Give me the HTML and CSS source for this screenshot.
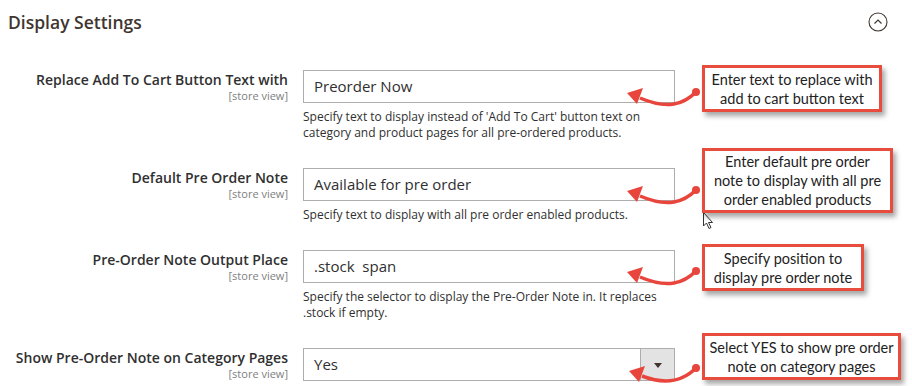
FILE: index.html
```html
<!DOCTYPE html>
<html lang="en">
<head>
  <meta charset="UTF-8">
  <title>Display Settings</title>
  <link rel="stylesheet" href="styles.css">
</head>
<body>
  <div class="section">
    <div class="section-head">
      <h2>Display Settings</h2>
      <span class="toggle">
        <svg width="20" height="20" viewBox="0 0 20 20">
          <circle cx="10" cy="10" r="9" fill="none" stroke="#41362f" stroke-width="1.1"/>
          <path d="M6.5 11.5 L10 8 L13.5 11.5" fill="none" stroke="#41362f" stroke-width="1.2"/>
        </svg>
      </span>
    </div>

    <div class="field">
      <div class="label">
        <span>Replace Add To Cart Button Text with</span>
        <small>[store view]</small>
      </div>
      <div class="control">
        <div class="input">Preorder Now</div>
        <p class="note">Specify text to display instead of 'Add To Cart' button text on category and product pages for all pre-ordered products.</p>
      </div>
    </div>

    <div class="field">
      <div class="label">
        <span>Default Pre Order Note</span>
        <small>[store view]</small>
      </div>
      <div class="control">
        <div class="input">Available for pre order</div>
        <p class="note">Specify text to display with all pre order enabled products.</p>
      </div>
    </div>

    <div class="field">
      <div class="label">
        <span>Pre-Order Note Output Place</span>
        <small>[store view]</small>
      </div>
      <div class="control">
        <div class="input">.stock &nbsp;span</div>
        <p class="note">Specify the selector to display the Pre-Order Note in. It replaces .stock if empty.</p>
      </div>
    </div>

    <div class="field">
      <div class="label">
        <span>Show Pre-Order Note on Category Pages</span>
        <small>[store view]</small>
      </div>
      <div class="control">
        <div class="input select">
          <span>Yes</span>
          <span class="caret"></span>
        </div>
      </div>
    </div>
  </div>

  <!-- annotations drawn over the form -->
  <svg class="arrows" width="912" height="386" viewBox="0 0 912 386">
    <g fill="#e8453c" stroke="#e8453c">
      <path d="M696 92 C684 104 668 110 640 98" fill="none" stroke-width="3.5"/>
      <polygon points="627,93 643,88 637,104" stroke="none"/>
      <circle cx="696" cy="92" r="4" stroke="none"/>

      <path d="M696 190 C684 202 668 208 640 196" fill="none" stroke-width="3.5"/>
      <polygon points="627,191 643,186 637,202" stroke="none"/>
      <circle cx="696" cy="190" r="4" stroke="none"/>

      <path d="M696 271 C684 283 668 289 640 277" fill="none" stroke-width="3.5"/>
      <polygon points="627,272 643,267 637,283" stroke="none"/>
      <circle cx="696" cy="271" r="4" stroke="none"/>

      <path d="M696 368 C684 380 668 386 642 376" fill="none" stroke-width="3.5"/>
      <polygon points="629,371 645,366 639,382" stroke="none"/>
      <circle cx="696" cy="368" r="4" stroke="none"/>
    </g>
    <path d="M703.5 212.5 L703.5 226 L706.5 223 L709 228.5 L711 227.5 L708.5 222.5 L712.5 222.5 Z" fill="#fff" stroke="#333" stroke-width="1"/>
  </svg>

  <div class="callout c1">Enter text to replace with<br>add to cart button text</div>
  <div class="callout c2">Enter default pre order<br>note to display with all pre<br>order enabled products</div>
  <div class="callout c3">Specify position to<br>display pre order note</div>
  <div class="callout c4">Select YES to show pre order<br>note on category pages</div>
</body>
</html>
```

FILE: styles.css
```css
* {
  box-sizing: border-box;
}

html, body {
  height: 386px;
  overflow: hidden;
}

body {
  margin: 0;
  background: #fff;
  font-family: 'Open Sans', sans-serif;
  color: #303030;
  position: relative;
  width: 912px;
}

.section {
  padding: 0 8px;
}

.section-head {
  display: flex;
  align-items: center;
  justify-content: space-between;
  height: 44px;
  padding-right: 16px;
}

.section-head h2 {
  margin: 0;
  font-size: 17.5px;
  font-weight: 600;
  color: #41362f;
}

.toggle {
  display: flex;
}

.field {
  display: grid;
  grid-template-columns: 280px 372px;
  column-gap: 15px;
  margin-bottom: 27px;
}

.field:last-child {
  margin-bottom: 0;
}

.section-head + .field {
  margin-top: 26px;
}

.label {
  text-align: right;
  padding-top: 1px;
}

.label span {
  display: block;
  font-size: 14px;
  font-weight: 600;
  line-height: 18px;
}

.label small {
  display: block;
  font-size: 11px;
  line-height: 13px;
  color: #808080;
}

.input {
  height: 33px;
  border: 1px solid #adadad;
  padding: 0 10px;
  font-size: 15px;
  line-height: 31px;
  color: #303030;
}

.select {
  display: flex;
  justify-content: space-between;
  padding-right: 0;
}

.caret {
  width: 34px;
  height: 31px;
  background: #e3e3e3;
  border-left: 1px solid #adadad;
  position: relative;
}

.caret::after {
  content: '';
  position: absolute;
  left: 13px;
  top: 14px;
  border-left: 4px solid transparent;
  border-right: 4px solid transparent;
  border-top: 5px solid #41362f;
}

.note {
  margin: 6px 0 0;
  font-size: 12px;
  line-height: 16px;
  color: #303030;
}

.arrows {
  position: absolute;
  left: 0;
  top: 0;
}

.callout {
  position: absolute;
  left: 702px;
  background: #fff;
  border: 3px solid #e74c3c;
  box-shadow: 3px 4px 5px rgba(0, 0, 0, 0.35);
  font-family: Lato, sans-serif;
  font-size: 14.5px;
  line-height: 19px;
  color: #222;
  text-align: center;
  display: flex;
  align-items: center;
  justify-content: center;
}

.c1 { top: 65px; width: 180px; height: 47px; }
.c2 { top: 148px; width: 191px; height: 65px; }
.c3 { top: 244px; width: 162px; height: 47px; }
.c4 { top: 333px; width: 199px; height: 47px; }
```
